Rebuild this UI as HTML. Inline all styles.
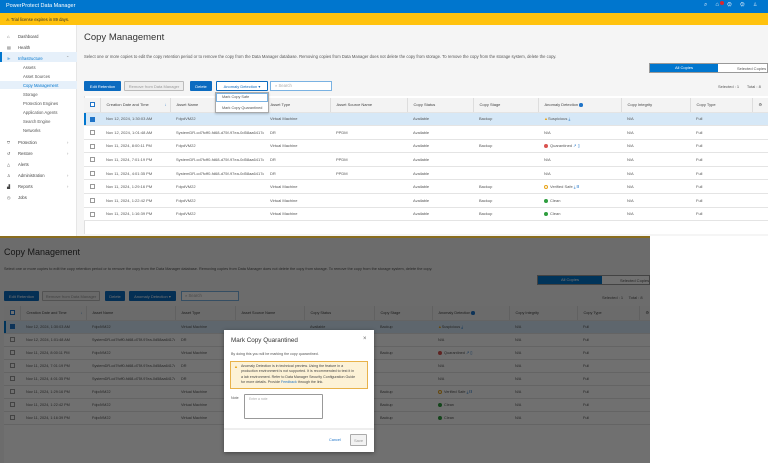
<!DOCTYPE html>
<html><head><meta charset="utf-8"><style>
*{margin:0;padding:0;box-sizing:border-box}
body{width:768px;height:463px;overflow:hidden;position:relative;background:#fff;font-family:"Liberation Sans",sans-serif;color:#333}
.a{position:absolute;white-space:nowrap}
.t{font-size:4.2px;color:#555}
table{position:absolute;border-collapse:collapse;table-layout:fixed;font-size:4px;color:#555;background:#fff}
td{border-bottom:1px solid #e4e4e4;white-space:nowrap;overflow:hidden;padding-left:6px}
tr.h td{background:#f3f3f3;color:#444;border-right:1px solid #ddd}
tr.s td{background:#d6e8f7}
.cb{display:inline-block;width:5px;height:5px;border:0.6px solid #999;background:#fff;vertical-align:middle}
.cbs{background:#1f74c8;border-color:#1f74c8}
.btn{position:absolute;font-size:4px;display:flex;align-items:center;justify-content:center;border-radius:1px}
.side{font-size:4.2px;color:#444}
.ic{display:inline-block;width:4px;height:4px;border-radius:50%;vertical-align:middle;margin-right:2px}
</style></head><body>
<div class="a" style="left:0;top:0;width:768px;height:13px;background:#0076ce"></div>
<div class="a" style="left:6px;top:3px;font-size:5.5px;color:#fff">PowerProtect Data Manager</div>
<div class="a" style="left:704px;top:2px;font-size:6px;color:#cfe4f7;letter-spacing:8px">⌕⌂⚙⚙♙</div>
<div class="a" style="left:720px;top:1px;width:4px;height:4px;border-radius:50%;background:#d9272e"></div>
<div class="a" style="left:0;top:13px;width:768px;height:12px;background:#ffc20e"></div>
<div class="a" style="left:6px;top:16.5px;font-size:4.2px;color:#333">⚠ Trial license expires in 89 days.</div>
<div class="a" style="left:77px;top:25px;width:691px;height:211px;background:#f5f5f5"></div>
<div class="a" style="left:84px;top:96px;width:684px;height:138px;background:#fff;border-left:1px solid #e0e0e0"></div>
<div class="a" style="left:0;top:25px;width:77px;height:211px;background:#fff;border-right:1px solid #e6e6e6"></div>
<div class="a" style="left:0;top:52px;width:77px;height:10px;background:#e6f0fa;border-left:2px solid #0076ce"></div>
<div class="a" style="left:0;top:81px;width:77px;height:8px;background:#e6f0fa"></div>
<div class="a side" style="left:7px;top:30.5px;line-height:11px">⌂<br>▤<br><span style="color:#0076ce">⊫</span></div>
<div class="a side" style="left:18px;top:30.5px;line-height:11px">Dashboard<br>Health<br><span style="color:#0076ce">Infrastructure</span></div>
<div class="a side" style="left:66px;top:52.5px;color:#888">⌄</div>
<div class="a side" style="left:23px;top:63px;line-height:9px;color:#555">Assets<br>Asset Sources<br><span style="color:#0076ce">Copy Management</span><br>Storage<br>Protection Engines<br>Application Agents<br>Search Engine<br>Networks</div>
<div class="a side" style="left:7px;top:136.5px;line-height:11px">⛉<br>↺<br>△<br>♙<br>▟<br>◷</div>
<div class="a side" style="left:18px;top:136.5px;line-height:11px">Protection<br>Restore<br>Alerts<br>Administration<br>Reports<br>Jobs</div>
<div class="a side" style="left:67px;top:136.5px;line-height:11px;color:#888">›<br>›<br><br>›<br>›</div>
<div class="a" style="left:84px;top:32px;font-size:9.5px;color:#333">Copy Management</div>
<div class="a t" style="left:84px;top:54px">Select one or more copies to edit the copy retention period or to remove the copy from the Data Manager database. Removing copies from Data Manager does not delete the copy from storage. To remove the copy from the storage system, delete the copy.</div>
<div class="a" style="left:649px;top:63px;width:119px;height:10px;border:1px solid #999;background:#fff"></div>
<div class="a" style="left:650px;top:64px;width:68px;height:8px;background:#0076ce;color:#fff;font-size:4px;text-align:center;line-height:8px">All Copies</div>
<div class="a t" style="left:737px;top:66px;font-size:4px">Selected Copies</div>
<div class="a t" style="left:718px;top:84px;font-size:4px">Selected : 1 &nbsp; &nbsp; &nbsp; Total : 8</div>
<div class="btn" style="left:84px;top:81px;width:37px;height:10px;background:#0b6bc0;color:#fff">Edit Retention</div>
<div class="btn" style="left:124px;top:81px;width:60px;height:10px;background:#eee;border:1px solid #bbb;color:#999">Remove from Data Manager</div>
<div class="btn" style="left:190px;top:81px;width:22px;height:10px;background:#0b6bc0;color:#fff">Delete</div>
<div class="btn" style="left:216px;top:81px;width:52px;height:10px;background:#fff;border:1px solid #0b6bc0;color:#0b6bc0">Anomaly Detection ▾</div>
<div class="a" style="left:270px;top:81px;width:62px;height:10px;background:#fff;border:1px solid #7ab2e2"></div>
<div class="a t" style="left:275px;top:83px;color:#aaa">⌕ Search</div>
<table style="left:84px;top:98px;width:684px">
<col style="width:16px"><col style="width:70px"><col style="width:94px"><col style="width:66px"><col style="width:77px"><col style="width:66px"><col style="width:65px"><col style="width:83px"><col style="width:69px"><col style="width:62px"><col style="width:16px">
<tr class="h" style="height:14px"><td><span class="cb" style="border-color:#1f74c8"></span></td><td>Creation Date and Time <span style="float:right;color:#1f74c8;padding-right:3px">↓</span></td><td>Asset Name</td><td>Asset Type</td><td>Asset Source Name</td><td>Copy Status</td><td>Copy Stage</td><td>Anomaly Detection <span class="ic" style="background:#1f74c8;width:3.5px;height:3.5px"></span></td><td>Copy Integrity</td><td>Copy Type</td><td>⚙</td></tr>
<tr class="s" style="height:13.6px"><td style="box-shadow:inset 2px 0 #0076ce"><span class="cb cbs"></span></td><td>Nov 12, 2024, 1:30:03 AM</td><td>FdpdVM22</td><td>Virtual Machine</td><td></td><td>Available</td><td>Backup</td><td><span style="color:#e8a317">▲</span>Suspicious <span style="color:#1f74c8">⤓</span></td><td>N/A</td><td>Full</td><td></td></tr>
<tr style="height:13.6px"><td><span class="cb"></span></td><td>Nov 12, 2024, 1:01:48 AM</td><td>SystemDR-cd7fcff0-fd68-d75f-97ea-0d58aa6417cd</td><td>DR</td><td>PPDM</td><td>Available</td><td></td><td>N/A</td><td>N/A</td><td>Full</td><td></td></tr>
<tr style="height:13.6px"><td><span class="cb"></span></td><td>Nov 11, 2024, 8:00:11 PM</td><td>FdpdVM22</td><td>Virtual Machine</td><td></td><td>Available</td><td>Backup</td><td><span class="ic" style="background:#d9534f"></span>Quarantined <span style="color:#1f74c8">↗ ▯</span></td><td>N/A</td><td>Full</td><td></td></tr>
<tr style="height:13.6px"><td><span class="cb"></span></td><td>Nov 11, 2024, 7:01:19 PM</td><td>SystemDR-cd7fcff0-fd68-d75f-97ea-0d58aa6417cd</td><td>DR</td><td>PPDM</td><td>Available</td><td></td><td>N/A</td><td>N/A</td><td>Full</td><td></td></tr>
<tr style="height:13.6px"><td><span class="cb"></span></td><td>Nov 11, 2024, 4:01:35 PM</td><td>SystemDR-cd7fcff0-fd68-d75f-97ea-0d58aa6417cd</td><td>DR</td><td>PPDM</td><td>Available</td><td></td><td>N/A</td><td>N/A</td><td>Full</td><td></td></tr>
<tr style="height:13.6px"><td><span class="cb"></span></td><td>Nov 11, 2024, 1:29:16 PM</td><td>FdpdVM22</td><td>Virtual Machine</td><td></td><td>Available</td><td>Backup</td><td><span class="ic" style="border:0.6px solid #e8a317"></span>Verified Safe <span style="color:#1f74c8">⤓ ▯</span></td><td>N/A</td><td>Full</td><td></td></tr>
<tr style="height:13.6px"><td><span class="cb"></span></td><td>Nov 11, 2024, 1:22:42 PM</td><td>FdpdVM22</td><td>Virtual Machine</td><td></td><td>Available</td><td>Backup</td><td><span class="ic" style="background:#2e9e3e"></span>Clean</td><td>N/A</td><td>Full</td><td></td></tr>
<tr style="height:13.6px"><td><span class="cb"></span></td><td>Nov 11, 2024, 1:16:39 PM</td><td>FdpdVM22</td><td>Virtual Machine</td><td></td><td>Available</td><td>Backup</td><td><span class="ic" style="background:#2e9e3e"></span>Clean</td><td>N/A</td><td>Full</td><td></td></tr>
</table>
<div class="a" style="left:215px;top:92px;width:54px;height:21px;background:#fff;border:1px solid #aaa;box-shadow:0 1px 2px rgba(0,0,0,.2)"></div>
<div class="a" style="left:216px;top:93px;width:52px;height:9px;border:1px solid #7ab2e2"></div>
<div class="a t" style="left:222px;top:95px;font-size:3.8px">Mark Copy Safe</div>
<div class="a t" style="left:222px;top:106px;font-size:3.8px">Mark Copy Quarantined</div>

<div class="a" style="left:0;top:236px;width:650px;height:227px;background:#f5f5f5;border-top:2px solid #8a6d1e;overflow:hidden">
<div class="a" style="left:4px;top:9px;font-size:9px;color:#333">Copy Management</div>
<div class="a t" style="left:4px;top:29px;font-size:3.8px">Select one or more copies to edit the copy retention period or to remove the copy from the Data Manager database. Removing copies from Data Manager does not delete the copy from storage. To remove the copy from the storage system, delete the copy.</div>
<div class="a" style="left:537px;top:37px;width:113px;height:10px;border:1px solid #999;background:#fff"></div>
<div class="a" style="left:538px;top:38px;width:64px;height:8px;background:#0076ce;color:#fff;font-size:4px;text-align:center;line-height:8px">All Copies</div>
<div class="a t" style="left:620px;top:40px;font-size:4px">Selected Copies</div>
<div class="a t" style="left:602px;top:57px;font-size:4px">Selected : 1 &nbsp; &nbsp; Total : 8</div>
<div class="btn" style="left:4px;top:53px;width:35px;height:10px;background:#0b6bc0;color:#fff">Edit Retention</div>
<div class="btn" style="left:42px;top:53px;width:58px;height:10px;background:#eee;border:1px solid #bbb;color:#999">Remove from Data Manager</div>
<div class="btn" style="left:105px;top:53px;width:20px;height:10px;background:#0b6bc0;color:#fff">Delete</div>
<div class="btn" style="left:129px;top:53px;width:47px;height:10px;background:#0b6bc0;color:#fff">Anomaly Detection ▾</div>
<div class="a" style="left:181px;top:53px;width:58px;height:10px;background:#fff;border:1px solid #7ab2e2"></div>
<div class="a t" style="left:185px;top:55px;color:#aaa">⌕ Search</div>
<div class="a" style="left:4px;top:68px;width:646px;height:159px;background:#fff"></div>
<table style="left:4px;top:68px;width:646px;font-size:3.8px">
<col style="width:16px"><col style="width:66px"><col style="width:89px"><col style="width:60px"><col style="width:69px"><col style="width:70px"><col style="width:58px"><col style="width:77px"><col style="width:68px"><col style="width:62px"><col style="width:11px">
<tr class="h" style="height:14px"><td><span class="cb" style="border-color:#1f74c8"></span></td><td>Creation Date and Time <span style="float:right;color:#1f74c8;padding-right:3px">↓</span></td><td>Asset Name</td><td>Asset Type</td><td>Asset Source Name</td><td>Copy Status</td><td>Copy Stage</td><td>Anomaly Detection <span class="ic" style="background:#1f74c8;width:3.5px;height:3.5px"></span></td><td>Copy Integrity</td><td>Copy Type</td><td>⚙</td></tr>
<tr class="s" style="height:13px"><td style="box-shadow:inset 2px 0 #0076ce"><span class="cb cbs"></span></td><td>Nov 12, 2024, 1:30:03 AM</td><td>FdpdVM22</td><td>Virtual Machine</td><td></td><td>Available</td><td>Backup</td><td><span style="color:#e8a317">▲</span>Suspicious <span style="color:#1f74c8">⤓</span></td><td>N/A</td><td>Full</td><td></td></tr>
<tr style="height:13px"><td><span class="cb"></span></td><td>Nov 12, 2024, 1:01:48 AM</td><td>SystemDR-cd7fcff0-fd68-d75f-97ea-0d58aa6417cd</td><td>DR</td><td>PPDM</td><td>Available</td><td></td><td>N/A</td><td>N/A</td><td>Full</td><td></td></tr>
<tr style="height:13px"><td><span class="cb"></span></td><td>Nov 11, 2024, 8:00:11 PM</td><td>FdpdVM22</td><td>Virtual Machine</td><td></td><td>Available</td><td>Backup</td><td><span class="ic" style="background:#d9534f"></span>Quarantined <span style="color:#1f74c8">↗ ▯</span></td><td>N/A</td><td>Full</td><td></td></tr>
<tr style="height:13px"><td><span class="cb"></span></td><td>Nov 11, 2024, 7:01:19 PM</td><td>SystemDR-cd7fcff0-fd68-d75f-97ea-0d58aa6417cd</td><td>DR</td><td>PPDM</td><td>Available</td><td></td><td>N/A</td><td>N/A</td><td>Full</td><td></td></tr>
<tr style="height:13px"><td><span class="cb"></span></td><td>Nov 11, 2024, 4:01:35 PM</td><td>SystemDR-cd7fcff0-fd68-d75f-97ea-0d58aa6417cd</td><td>DR</td><td>PPDM</td><td>Available</td><td></td><td>N/A</td><td>N/A</td><td>Full</td><td></td></tr>
<tr style="height:13px"><td><span class="cb"></span></td><td>Nov 11, 2024, 1:29:16 PM</td><td>FdpdVM22</td><td>Virtual Machine</td><td></td><td>Available</td><td>Backup</td><td><span class="ic" style="border:0.6px solid #e8a317"></span>Verified Safe <span style="color:#1f74c8">⤓ ▯</span></td><td>N/A</td><td>Full</td><td></td></tr>
<tr style="height:13px"><td><span class="cb"></span></td><td>Nov 11, 2024, 1:22:42 PM</td><td>FdpdVM22</td><td>Virtual Machine</td><td></td><td>Available</td><td>Backup</td><td><span class="ic" style="background:#2e9e3e"></span>Clean</td><td>N/A</td><td>Full</td><td></td></tr>
<tr style="height:13px"><td><span class="cb"></span></td><td>Nov 11, 2024, 1:16:39 PM</td><td>FdpdVM22</td><td>Virtual Machine</td><td></td><td>Available</td><td>Backup</td><td><span class="ic" style="background:#2e9e3e"></span>Clean</td><td>N/A</td><td>Full</td><td></td></tr>
</table>
<div class="a" style="left:0;top:0;width:650px;height:227px;background:rgba(0,0,0,0.56)"></div>
</div>
<div class="a" style="left:224px;top:330px;width:150px;height:122px;background:#fff;box-shadow:0 1px 4px rgba(0,0,0,.4)"></div>
<div class="a" style="left:231px;top:337px;font-size:6.3px;color:#333">Mark Copy Quarantined</div>
<div class="a" style="left:363px;top:336px;font-size:6px;color:#666">×</div>
<div class="a t" style="left:231px;top:352px;font-size:3.6px">By doing this you will be marking the copy quarantined.</div>
<div class="a" style="left:230px;top:361px;width:138px;height:28px;background:#fdf2d6;border:1px solid #e8b24a"></div>
<div class="a" style="left:234px;top:364px;font-size:4px;color:#e8a317">▲</div>
<div class="a t" style="left:241px;top:364px;font-size:3.6px;line-height:5.3px;color:#444">Anomaly Detection is in technical preview. Using the feature in a<br>production environment is not supported. It is recommended to test it in<br>a lab environment. Refer to Data Manager Security Configuration Guide<br>for more details. Provide <span style="color:#1f74c8">Feedback</span> through the link.</div>
<div class="a t" style="left:231px;top:396px;font-size:3.6px">Note</div>
<div class="a" style="left:244px;top:394px;width:79px;height:25px;border:1px solid #999;border-radius:1px"></div>
<div class="a t" style="left:249px;top:397px;font-size:3.4px;color:#aaa">Enter a note</div>
<div class="a" style="left:224px;top:428px;width:150px;height:2px;background:#eee"></div>
<div class="a t" style="left:329px;top:438px;font-size:3.8px;color:#1f74c8">Cancel</div>
<div class="btn" style="left:350px;top:434px;width:17px;height:12px;background:#f2f2f2;border:1px solid #aaa;color:#999">Save</div>
</body></html>
